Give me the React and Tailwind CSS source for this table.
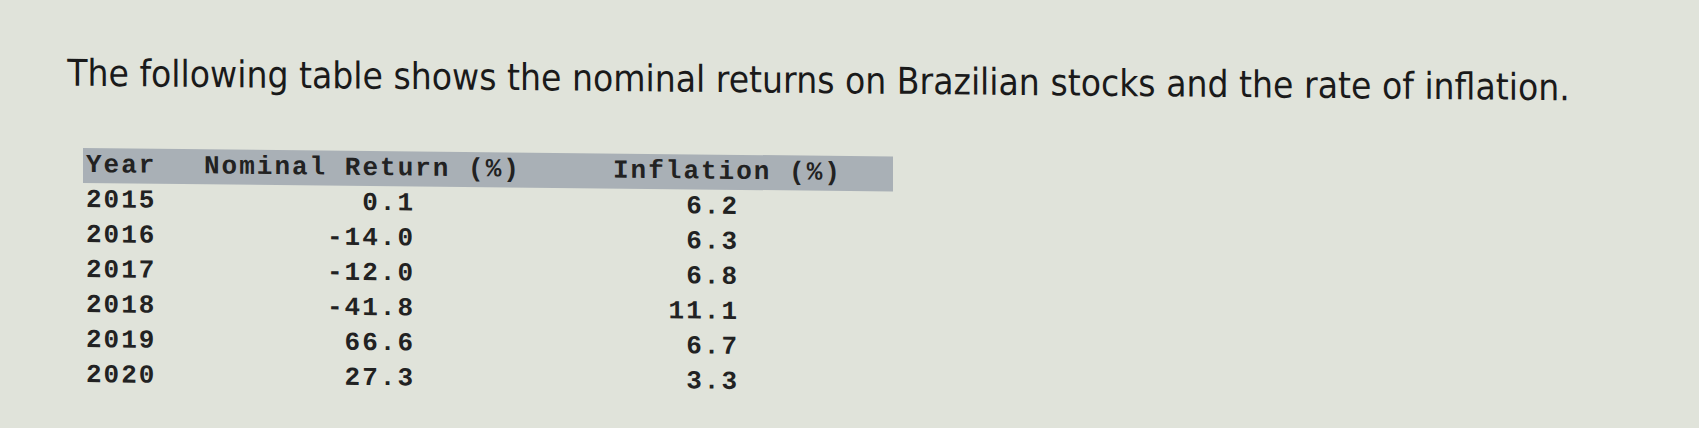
export default function App() {
  const rows = [
    ["2015", "0.1", "6.2"],
    ["2016", "-14.0", "6.3"],
    ["2017", "-12.0", "6.8"],
    ["2018", "-41.8", "11.1"],
    ["2019", "66.6", "6.7"],
    ["2020", "27.3", "3.3"],
  ];
  return (
    <div className="w-[1699px] h-[428px] overflow-hidden bg-[#e0e3da] text-[#1a1a1a]">
      <div className="flex flex-col pt-[54px]">
        <p className="pl-[75px] whitespace-nowrap font-['DejaVu_Sans',sans-serif] text-[37px] leading-[37px] origin-left scale-x-[0.896] skew-y-[0.5deg]">
          The following table shows the nominal returns on Brazilian stocks and the rate of inflation.
        </p>
        <div className="ml-[83px] mt-[57px] w-[810px] origin-left skew-y-[0.6deg] font-['Liberation_Mono',monospace] text-[26px] tracking-[2px] font-bold text-[#222222]">
          <div className="grid grid-cols-[121px_409px_280px] h-[35px] leading-[35px] bg-[#a9b0b6]">
            <div className="pl-[3px]">Year</div>
            <div>Nominal Return (%)</div>
            <div>Inflation (%)</div>
          </div>
          {rows.map((r) => (
            <div key={r[0]} className="grid grid-cols-[121px_409px_280px] h-[35px] leading-[35px]">
              <div className="pl-[3px]">{r[0]}</div>
              <div className="text-right pr-[198px]">{r[1]}</div>
              <div className="text-right pr-[154px]">{r[2]}</div>
            </div>
          ))}
        </div>
      </div>
    </div>
  );
}
